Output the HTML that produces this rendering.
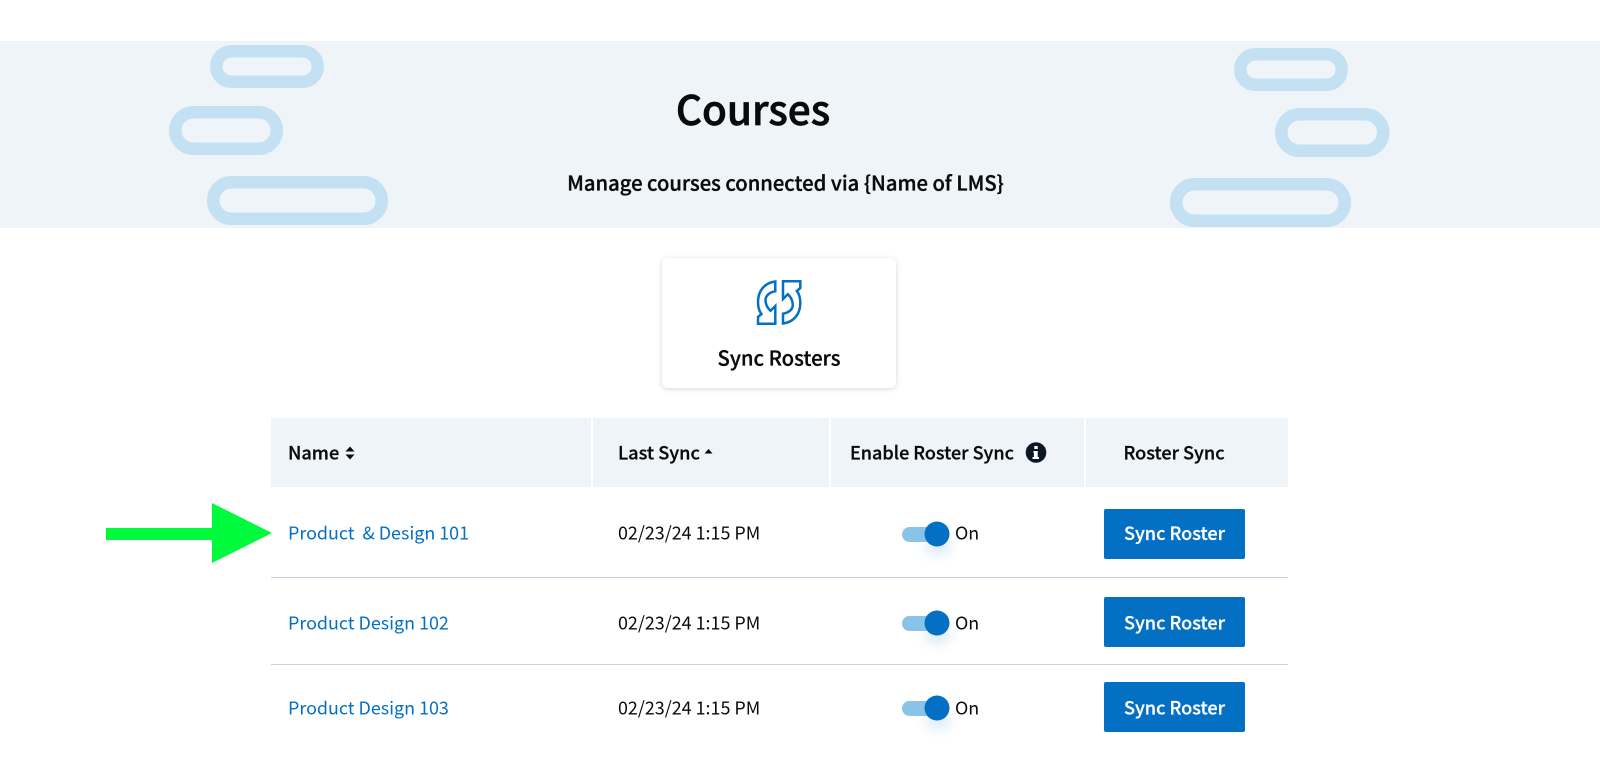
<!DOCTYPE html>
<html lang="en"><head><meta charset="utf-8"><title>Courses</title>
<style>
html,body{margin:0;padding:0;background:#fff;width:1600px;height:763px;overflow:hidden}
svg{display:block}
text{font-family:"Noto Sans CJK JP","Liberation Sans",sans-serif;fill:#0a0a0a;font-size:17.900px}
.h{font-weight:500;stroke:#0a0a0a;stroke-width:.3px;font-size:18px}
.l{fill:#0370c4}
.b{fill:#fff;font-weight:500;font-size:18.100px;stroke:#fff;stroke-width:.25px}
</style></head><body>
<svg width="1600" height="763" viewBox="0 0 1600 763" xmlns="http://www.w3.org/2000/svg">
<defs>
<filter id="card" x="-20%" y="-20%" width="140%" height="140%"><feDropShadow dx="0" dy="1" stdDeviation="2.5" flood-color="#30405a" flood-opacity=".22"/></filter>
<filter id="blur" x="-100%" y="-100%" width="300%" height="300%"><feGaussianBlur stdDeviation="6"/></filter>
<clipPath id="band"><rect x="0" y="41" width="1600" height="187"/></clipPath>
<g id="tog">
<ellipse cx="938" cy="12" rx="13" ry="9" fill="#0370c4" opacity=".14" filter="url(#blur)"/>
<rect x="902" y="-7" width="36" height="15" rx="7.5" fill="#8ac3e8"/>
<circle cx="937" cy="0" r="12.5" fill="#0370c4"/>
</g>
</defs>

<rect x="0" y="41" width="1600" height="187" fill="#eff4f9"/>
<g clip-path="url(#band)" fill="none" stroke="#c4e0f3" stroke-width="12.5">
<rect x="216.25" y="51.25" width="101.5" height="30.5" rx="15.25"/>
<rect x="175.25" y="112.25" width="101.5" height="36.5" rx="18.25"/>
<rect x="213.25" y="182.25" width="168.5" height="36.5" rx="18.25"/>
<rect x="1240.25" y="54.25" width="101.5" height="30.5" rx="15.25"/>
<rect x="1281.25" y="114.25" width="102" height="36.5" rx="18.25"/>
<rect x="1176.25" y="184.25" width="168.5" height="36.5" rx="18.25"/>
</g>
<text x="753" y="125" text-anchor="middle" class="h" style="font-size:40.500px;stroke-width:.7px">Courses</text>
<text x="785.500" y="190.500" text-anchor="middle" class="h" style="font-size:20.200px;stroke-width:.35px">Manage courses connected via {Name of LMS}</text>

<rect x="662" y="258" width="234" height="130" rx="6" fill="#fff" filter="url(#card)"/>
<g fill="none" stroke="#0370c4" stroke-width="2.500" stroke-linejoin="miter">
<path d="M775.300 281.500C763.500 283 758 292 758 302C758 307 759 311 761.500 314L758 317V323.700H775.300V306L770.500 310.800C767.500 308 765.500 304 765.500 300C765.500 296 769 292.300 775.300 291.300Z"/>
<path d="M783 323.500C794.800 322 800.300 313 800.300 303C800.300 298 799.300 294 796.800 291L800.300 288V281.300H783V299L787.800 294.200C790.800 297 792.800 301 792.800 305C792.800 309 789.300 312.700 783 313.700Z"/>
</g>
<text x="779" y="365.500" text-anchor="middle" class="h" style="font-size:20.300px">Sync Rosters</text>

<rect x="271" y="418" width="320" height="69" fill="#eff4f9"/>
<rect x="593" y="418" width="236" height="69" fill="#eff4f9"/>
<rect x="831" y="418" width="253" height="69" fill="#eff4f9"/>
<rect x="1086" y="418" width="202" height="69" fill="#eff4f9"/>
<text x="288" y="459.500" class="h" style="font-size:18.200px">Name</text>
<path d="M345.500 451.500L350 446.500L354.500 451.500ZM345.500 454.500L350 459.500L354.500 454.500Z" fill="#0a0a0a"/>
<text x="618" y="459.500" class="h" style="font-size:18.200px">Last Sync</text>
<path d="M704.500 453.500L708.500 449L712.500 453.500Z" fill="#0a0a0a"/>
<text x="850" y="459.500" class="h">Enable Roster Sync</text>
<circle cx="1036" cy="452.500" r="10.300" fill="#0e1726"/>
<path d="M1034.300 446h3.400v3h-3.400zM1033.500 451h4.200v6h1.300v2h-6.500v-2h1.400v-4h-.4z" fill="#fff"/>
<text x="1174" y="459.500" text-anchor="middle" class="h" style="font-size:18.100px">Roster Sync</text>

<path d="M106 528H212V503L272 533L212 563V540H106Z" fill="#00fb3c"/>

<text x="288" y="539.500" class="l" xml:space="preserve">Product  &amp; Design 101</text>
<text x="618" y="539.500">02/23/24 1:15 PM</text>
<use href="#tog" y="534"/>
<text x="955" y="539.500">On</text>
<rect x="1104" y="509" width="141" height="50" rx="2" fill="#0370c4"/>
<text x="1174.500" y="540" text-anchor="middle" class="b">Sync Roster</text>
<rect x="271" y="577" width="1017" height="1" fill="#c3d2e2"/>

<text x="288" y="629.500" class="l">Product Design 102</text>
<text x="618" y="629.500">02/23/24 1:15 PM</text>
<use href="#tog" y="623"/>
<text x="955" y="629.500">On</text>
<rect x="1104" y="597" width="141" height="50" rx="2" fill="#0370c4"/>
<text x="1174.500" y="629.500" text-anchor="middle" class="b">Sync Roster</text>
<rect x="271" y="664" width="1017" height="1" fill="#c3d2e2"/>

<text x="288" y="714.500" class="l">Product Design 103</text>
<text x="618" y="714.500">02/23/24 1:15 PM</text>
<use href="#tog" y="708"/>
<text x="955" y="714.500">On</text>
<rect x="1104" y="682" width="141" height="50" rx="2" fill="#0370c4"/>
<text x="1174.500" y="714.500" text-anchor="middle" class="b">Sync Roster</text>
</svg>
</body></html>
